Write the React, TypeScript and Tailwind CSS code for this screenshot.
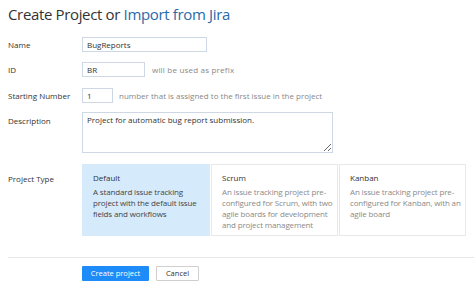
const font = { fontFamily: "'Open Sans', 'Noto Sans', sans-serif" };

const types = [
  {
    name: "Default",
    lines: ["A standard issue tracking", "project with the default issue", "fields and workflows"],
    active: true,
  },
  {
    name: "Scrum",
    lines: [
      "An issue tracking project pre-",
      "configured for Scrum, with two",
      "agile boards for development",
      "and project management",
    ],
    active: false,
  },
  {
    name: "Kanban",
    lines: ["An issue tracking project pre-", "configured for Kanban, with an", "agile board"],
    active: false,
  },
];

function Label({ children }: { children: React.ReactNode }) {
  return <div className="w-[74px] shrink-0 text-[8px] text-[#333]">{children}</div>;
}

export default function App() {
  return (
    <div className="w-[474px] h-[289px] bg-white overflow-hidden" style={font}>
      <h1 className="pl-[8px] pt-[3px] text-[15px] leading-[22px] text-[#333] tracking-[-0.35px]">
        Create Project or <span className="text-[#2a6aa8]">Import from Jira</span>
      </h1>

      <div className="pl-[8px] mt-[12px] flex items-center h-[15px]">
        <Label>Name</Label>
        <input
          className="w-[125px] h-[15px] border border-[#cdd8e4] px-[4px] text-[8px] text-[#333] outline-none"
          defaultValue="BugReports"
        />
      </div>

      <div className="pl-[8px] mt-[10px] flex items-center h-[15px]">
        <Label>ID</Label>
        <input
          className="w-[63px] h-[15px] border border-[#cdd8e4] px-[4px] text-[8px] text-[#333] outline-none"
          defaultValue="BR"
        />
        <span className="ml-[7px] text-[8px] text-[#888] tracking-[0.2px]">will be used as prefix</span>
      </div>

      <div className="pl-[8px] mt-[11px] flex items-center h-[15px]">
        <Label>Starting Number</Label>
        <input
          className="w-[31px] h-[15px] border border-[#cdd8e4] px-[4px] text-[8px] text-[#333] outline-none"
          defaultValue="1"
        />
        <span className="ml-[6px] text-[8px] text-[#888]">
          number that is assigned to the first issue in the project
        </span>
      </div>

      <div className="pl-[8px] mt-[9px] flex items-start">
        <div className="pt-[3px]">
          <Label>Description</Label>
        </div>
        <textarea
          className="w-[251px] h-[41px] border border-[#cdd8e4] px-[4px] py-[1px] text-[8px] leading-[11px] text-[#333] outline-none resize-y"
          defaultValue="Project for automatic bug report submission."
        />
      </div>

      <div className="pl-[8px] mt-[11px] flex items-start">
        <div className="pt-[9px]">
          <Label>Project Type</Label>
        </div>
        <div className="flex gap-[1px]">
          {types.map((t) => (
            <div
              key={t.name}
              className={
                t.active
                  ? "w-[128px] h-[72px] bg-[#d5ebfc] px-[11px] pt-[8px] whitespace-nowrap"
                  : "w-[127px] h-[72px] bg-white border border-[#e8e8e8] px-[10px] pt-[7px] whitespace-nowrap"
              }
            >
              <div className="text-[8px] leading-[11px] text-[#333]">{t.name}</div>
              <div
                className={
                  t.active
                    ? "mt-[3px] text-[8px] leading-[11px] text-[#444] tracking-[-0.15px]"
                    : "mt-[3px] text-[8px] leading-[11px] text-[#8a8a8a] tracking-[-0.15px]"
                }
              >
                {t.lines.map((l) => (
                  <div key={l}>{l}</div>
                ))}
              </div>
            </div>
          ))}
        </div>
      </div>

      <div className="ml-[8px] mt-[21px] border-t border-[#e6e6e6]" />

      <div className="pl-[82px] mt-[8px] flex gap-[7px]">
        <button className="w-[67px] h-[15px] bg-[#1d8cf8] text-white text-[7.5px] leading-[15px] rounded-[1px]">
          Create project
        </button>
        <button className="w-[43px] h-[15px] bg-white border border-[#cfcfcf] text-[#333] text-[7.5px] leading-[13px] rounded-[1px]">
          Cancel
        </button>
      </div>
    </div>
  );
}
